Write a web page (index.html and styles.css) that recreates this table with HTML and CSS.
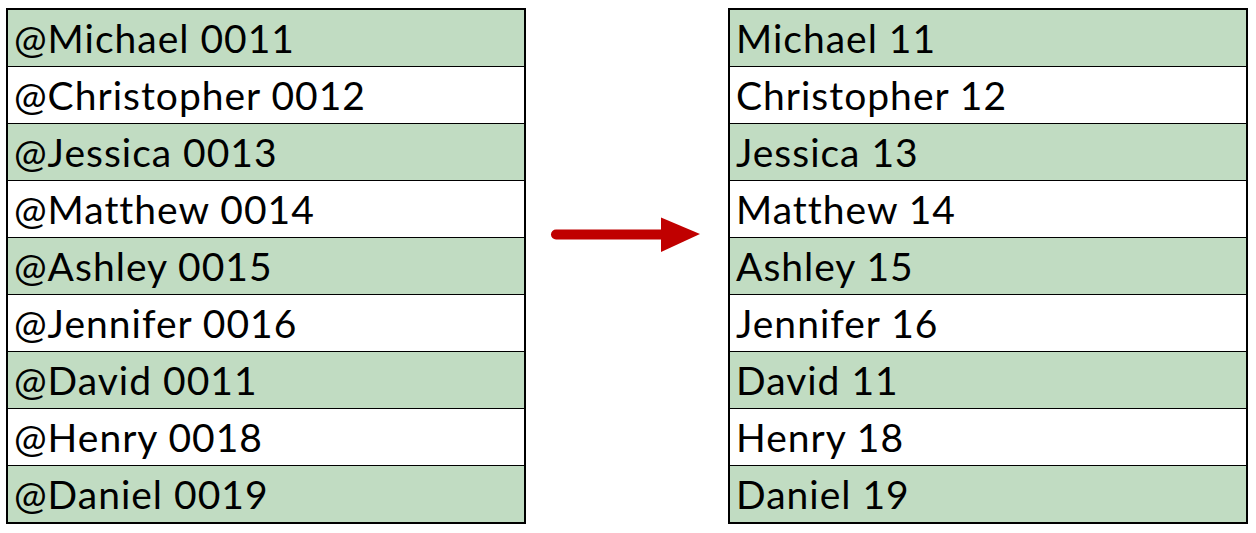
FILE: index.html
```html
<!DOCTYPE html>
<html>
<head>
<meta charset="utf-8">
<link rel="stylesheet" href="styles.css">
</head>
<body>
<div class="page">
  <div class="table">
    <div class="row green">@Michael 0011</div>
    <div class="row">@Christopher 0012</div>
    <div class="row green">@Jessica 0013</div>
    <div class="row">@Matthew 0014</div>
    <div class="row green">@Ashley 0015</div>
    <div class="row">@Jennifer 0016</div>
    <div class="row green">@David 0011</div>
    <div class="row">@Henry 0018</div>
    <div class="row green">@Daniel 0019</div>
  </div>
  <div class="arrow-col">
    <svg class="arrow" width="202" height="40" viewBox="0 0 202 40">
      <line x1="30" y1="19.5" x2="140" y2="19.5" stroke="#C00000" stroke-width="10" stroke-linecap="round"/>
      <polygon points="135,2.5 174,19 135,37" fill="#C00000"/>
    </svg>
  </div>
  <div class="table">
    <div class="row green">Michael 11</div>
    <div class="row">Christopher 12</div>
    <div class="row green">Jessica 13</div>
    <div class="row">Matthew 14</div>
    <div class="row green">Ashley 15</div>
    <div class="row">Jennifer 16</div>
    <div class="row green">David 11</div>
    <div class="row">Henry 18</div>
    <div class="row green">Daniel 19</div>
  </div>
</div>
</body>
</html>
```
FILE: styles.css
```css
html, body {
  margin: 0;
  padding: 0;
  background: #ffffff;
}
.page {
  display: flex;
  align-items: flex-start;
  padding: 8px 0 0 6px;
}
.table {
  width: 516px;
  border: 2px solid #000;
  display: flex;
  flex-direction: column;
}
.row {
  height: 56px;
  display: flex;
  align-items: center;
  padding-left: 6px;
  font-family: "Lato", "Open Sans", sans-serif;
  font-size: 39px;
  letter-spacing: 1px;
  color: #000;
  white-space: nowrap;
}
.row + .row {
  border-top: 1px solid #000;
}
.green {
  background: #c1dcc2;
}
.arrow-col {
  width: 202px;
  display: flex;
}
.arrow {
  display: block;
  margin-top: 207px;
}
```
